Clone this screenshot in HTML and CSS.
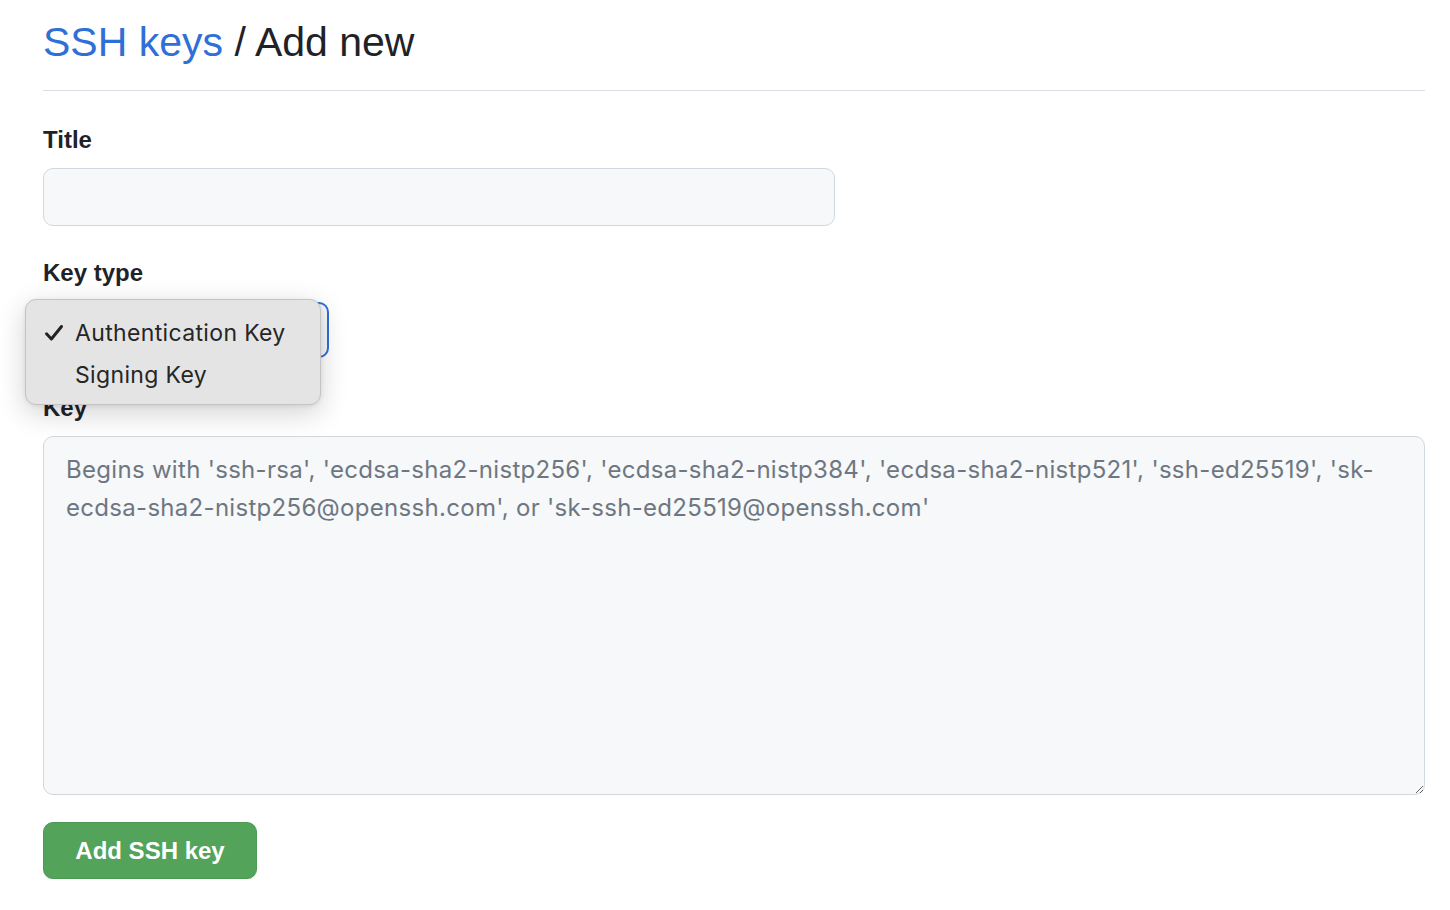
FILE: index.html
```html
<!DOCTYPE html>
<html lang="en">
<head>
<meta charset="utf-8">
<title>SSH keys / Add new</title>
<link rel="stylesheet" href="styles.css">
</head>
<body>
<main class="page">
  <div class="subhead">
    <h2 class="subhead-heading"><a class="crumb" href="#">SSH keys</a> / Add new</h2>
  </div>
  <form class="form">
    <div class="form-group">
      <label class="label" for="title">Title</label>
      <input class="input input-title" id="title" type="text">
    </div>
    <div class="form-group">
      <label class="label">Key type</label>
      <div class="select-wrap">
        <div class="select">Authentication Key</div>
        <div class="menu">
          <div class="menu-item">
            <svg class="check" viewBox="0 0 20 20" width="20" height="20" aria-hidden="true"><path d="M2.5 10.8 L7.4 16 L17.5 3.5" fill="none" stroke="#222" stroke-width="3" stroke-linecap="round" stroke-linejoin="round"/></svg>
            <span>Authentication Key</span>
          </div>
          <div class="menu-item"><span class="spacer"></span><span>Signing Key</span></div>
        </div>
      </div>
    </div>
    <div class="form-group form-group-key">
      <label class="label" for="key">Key</label>
      <textarea class="input textarea" id="key" placeholder="Begins with 'ssh-rsa', 'ecdsa-sha2-nistp256', 'ecdsa-sha2-nistp384', 'ecdsa-sha2-nistp521', 'ssh-ed25519', 'sk-&#10;ecdsa-sha2-nistp256@openssh.com', or 'sk-ssh-ed25519@openssh.com'"></textarea>
    </div>
    <button class="btn-primary" type="button">Add SSH key</button>
  </form>
</main>
</body>
</html>
```

FILE: styles.css
```css
* { box-sizing: border-box; }
html, body {
  margin: 0;
  padding: 0;
  background: #ffffff;
}
body {
  font-family: "Liberation Sans", Arial, sans-serif;
  color: #1f2328;
}
.page {
  padding: 11px 25px 0 43px;
}
.subhead {
  padding-bottom: 16px;
  border-bottom: 1px solid #d8dee4;
}
.subhead-heading {
  margin: 0;
  font-size: 41px;
  line-height: 63px;
  font-weight: 400;
  color: #1f2328;
}
.crumb {
  color: #2f6fd8;
  text-decoration: none;
}
.form {
  display: flex;
  flex-direction: column;
  padding-top: 30px;
}
.form-group {
  display: flex;
  flex-direction: column;
  margin-bottom: 28px;
}
.form-group-key {
  margin-top: 3px;
}
.label {
  font-size: 24px;
  font-weight: 700;
  line-height: 37px;
  margin-bottom: 10px;
  color: #1f2328;
}
.input {
  font-family: "Liberation Sans", Arial, sans-serif;
  font-size: 24px;
  background: #f6f8fa;
  border: 1px solid #d0d7de;
  border-radius: 10px;
  color: #1f2328;
  outline: none;
}
.input-title {
  width: 792px;
  height: 58px;
  padding: 0 20px;
}
.select-wrap {
  position: relative;
  width: 286px;
  height: 56px;
  margin-top: 1px;
}
.select {
  width: 286px;
  height: 56px;
  border: 2px solid #2f6fd8;
  border-radius: 10px;
  background: #f6f8fa;
  font-size: 24px;
  line-height: 52px;
  padding: 0 20px;
  color: #1f2328;
}
.menu {
  position: absolute;
  left: -18px;
  top: -3px;
  width: 296px;
  height: 106px;
  padding: 12px 0 0 0;
  background: #e4e4e4;
  border: 1px solid #c4c4c4;
  border-radius: 11px;
  box-shadow: 0 8px 28px rgba(0, 0, 0, 0.18), 0 1px 4px rgba(0, 0, 0, 0.08);
  z-index: 5;
  font-family: Inter, "Noto Sans", sans-serif;
}
.menu-item {
  display: flex;
  align-items: center;
  height: 42px;
  padding-left: 18px;
  font-size: 23px;
  color: #262626;
  letter-spacing: 0.35px;
}
.check {
  width: 20px;
  height: 20px;
  margin-right: 11px;
  flex: none;
}
.spacer {
  width: 20px;
  margin-right: 11px;
  flex: none;
}
.textarea {
  width: 1382px;
  height: 359px;
  padding: 14px 22px;
  font-family: Inter, "Liberation Sans", sans-serif;
  font-size: 24px;
  letter-spacing: 0.3px;
  line-height: 38px;
  resize: vertical;
}
.textarea::placeholder {
  color: #6e7781;
  opacity: 1;
}
.btn-primary {
  align-self: flex-start;
  width: 214px;
  height: 57px;
  margin-top: -1px;
  background: #53a35a;
  border: 1px solid #4a9a52;
  border-radius: 10px;
  color: #ffffff;
  font-family: "Liberation Sans", Arial, sans-serif;
  font-size: 24px;
  font-weight: 700;
  box-shadow: 0 1px 0 rgba(31, 35, 40, 0.1);
  cursor: pointer;
}
```
